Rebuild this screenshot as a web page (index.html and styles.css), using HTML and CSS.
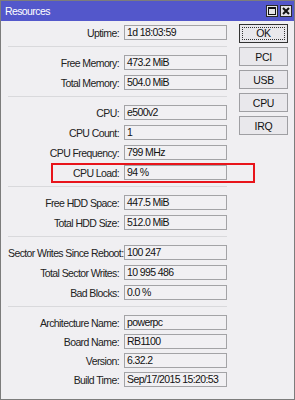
FILE: index.html
```html
<!DOCTYPE html>
<html>
<head>
    <meta charset="UTF-8">
    <title>Resources</title>
    <link rel="stylesheet" href="styles.css">
</head>
<body>
    <div class="window">
        <div class="titlebar">
            <span class="title">Resources</span>
            <div class="controls">
                <span class="ctl">
                    <svg width="10" height="10" viewBox="0 0 10 10"><rect x="1.5" y="1.5" width="7" height="7" fill="none" stroke="#111" stroke-width="1"/><rect x="1" y="1" width="8" height="2" fill="#111"/></svg>
                </span>
                <span class="ctl">
                    <svg width="10" height="10" viewBox="0 0 10 10"><path d="M2 2 L8 8 M8 2 L2 8" stroke="#111" stroke-width="2"/></svg>
                </span>
            </div>
        </div>

        <div class="content">
            <div class="form">
                <div class="group">
                    <div class="row"><label>Uptime:</label><div class="field">1d 18:03:59</div></div>
                </div>
                <div class="group">
                    <div class="row"><label>Free Memory:</label><div class="field">473.2 MiB</div></div>
                    <div class="row"><label>Total Memory:</label><div class="field">504.0 MiB</div></div>
                </div>
                <div class="group">
                    <div class="row"><label>CPU:</label><div class="field">e500v2</div></div>
                    <div class="row"><label>CPU Count:</label><div class="field">1</div></div>
                    <div class="row"><label>CPU Frequency:</label><div class="field">799 MHz</div></div>
                    <div class="row"><label>CPU Load:</label><div class="field">94 %</div></div>
                </div>
                <div class="group">
                    <div class="row"><label>Free HDD Space:</label><div class="field">447.5 MiB</div></div>
                    <div class="row"><label>Total HDD Size:</label><div class="field">512.0 MiB</div></div>
                </div>
                <div class="group">
                    <div class="row"><label>Sector Writes Since Reboot:</label><div class="field">100 247</div></div>
                    <div class="row"><label>Total Sector Writes:</label><div class="field">10 995 486</div></div>
                    <div class="row"><label>Bad Blocks:</label><div class="field">0.0 %</div></div>
                </div>
                <div class="group tight">
                    <div class="row"><label>Architecture Name:</label><div class="field">powerpc</div></div>
                    <div class="row"><label>Board Name:</label><div class="field">RB1100</div></div>
                    <div class="row"><label>Version:</label><div class="field">6.32.2</div></div>
                    <div class="row"><label>Build Time:</label><div class="field">Sep/17/2015 15:20:53</div></div>
                </div>
            </div>

            <div class="buttons">
                <button class="btn default"><span>OK</span></button>
                <button class="btn">PCI</button>
                <button class="btn">USB</button>
                <button class="btn">CPU</button>
                <button class="btn">IRQ</button>
            </div>
        </div>

        <!-- annotation box around CPU Load -->
        <div class="highlight"></div>
    </div>
</body>
</html>
```

FILE: styles.css
```css
body {
    margin: 0;
    font-family: 'Liberation Sans', Arial, sans-serif;
    font-size: 10.5px;
    letter-spacing: -0.6px;
    color: #1a1a1a;
    background: #ffffff;
}
.window {
    position: relative;
    width: 295px;
    height: 400px;
    box-sizing: border-box;
    border: 1px solid #7c7c7c;
    background: #f0eff2;
}
.titlebar {
    height: 20px;
    background: #5357cb;
    display: flex;
    align-items: center;
    justify-content: space-between;
    padding: 0 2px 0 4px;
}
.title {
    color: #ffffff;
    font-size: 10.5px;
}
.controls {
    display: flex;
    gap: 2px;
}
.ctl {
    width: 12px;
    height: 12px;
    box-sizing: border-box;
    border: 1px solid #2a2a2a;
    background: #e4e4e8;
    display: flex;
    align-items: center;
    justify-content: center;
}
.ctl svg {
    display: block;
}
.content {
    display: flex;
    gap: 12px;
    padding: 0 0 0 7px;
}
.form {
    width: 219px;
}
.group {
    padding: 8px 0 6px;
    border-bottom: 1px solid #d9d9dc;
}
.group:first-child {
    padding-top: 4px;
}
.group:last-child {
    border-bottom: none;
}
.row {
    display: grid;
    grid-template-columns: 111px 103px;
    gap: 5px;
    align-items: center;
    height: 15px;
    margin-bottom: 5px;
}
.group.tight .row {
    margin-bottom: 4px;
}
.group .row:last-child {
    margin-bottom: 0;
}
label {
    text-align: right;
    white-space: nowrap;
    color: #222;
}
.field {
    height: 15px;
    box-sizing: border-box;
    border: 1px solid #a3a3a6;
    background: #f1f0f3;
    padding: 0 2px;
    line-height: 13px;
    color: #111;
    white-space: nowrap;
    overflow: hidden;
}
.buttons {
    display: flex;
    flex-direction: column;
    gap: 4px;
    padding-top: 3px;
}
.btn {
    width: 49px;
    height: 19px;
    padding: 0;
    border: 1px solid #9f9fa3;
    background: #e9e8ec;
    font-family: inherit;
    font-size: 10.5px;
    letter-spacing: -0.3px;
    color: #111;
}
.btn.default {
    border-color: #333;
    padding: 2px;
}
.btn.default span {
    display: block;
    height: 100%;
    box-sizing: border-box;
    border: 1px dotted #333;
    line-height: 11px;
}
.highlight {
    position: absolute;
    left: 50px;
    top: 162px;
    width: 204px;
    height: 20px;
    box-sizing: border-box;
    border: 2px solid #e8141b;
}
```
